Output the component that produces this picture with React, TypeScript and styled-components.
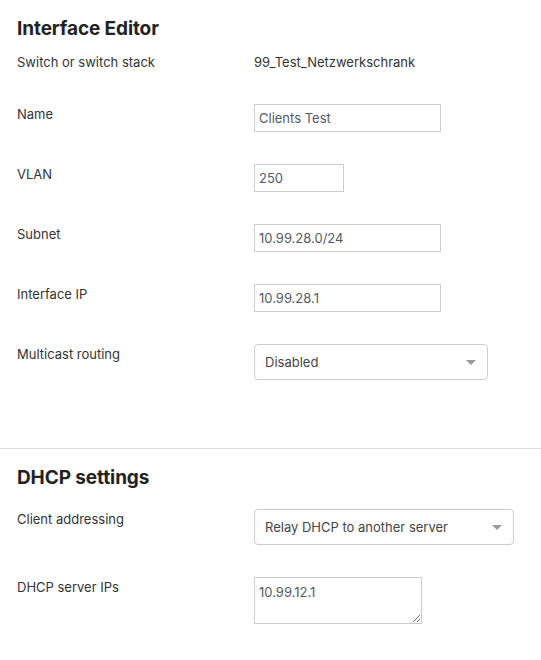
import React from 'react';
import styled, { createGlobalStyle } from 'styled-components';

const GlobalStyle = createGlobalStyle`
  html, body {
    margin: 0;
    padding: 0;
    background: #ffffff;
  }
  body {
    font-family: Inter, "Noto Sans", "Liberation Sans", sans-serif;
    color: #333333;
  }
`;

const Section = styled.section<{ $divider?: boolean; $bottom: number }>`
  padding: 17px 17px ${p => p.$bottom}px 17px;
  border-bottom: ${p => (p.$divider ? '1px solid #dcdcdc' : 'none')};
`;

const Title = styled.h2<{ $gap: number }>`
  margin: 0 0 ${p => p.$gap}px 0;
  font-size: 19px;
  line-height: 24px;
  font-weight: 700;
  color: #222222;
  letter-spacing: -0.1px;
`;

const Row = styled.div<{ $gap?: number }>`
  display: grid;
  grid-template-columns: 237px 1fr;
  align-items: start;
  margin-bottom: ${p => p.$gap ?? 32}px;
`;

const Label = styled.div`
  font-size: 13px;
  line-height: 20px;
  color: #333333;
`;

const Value = styled.div`
  font-size: 13px;
  line-height: 20px;
  color: #333333;
`;

const TextInput = styled.input<{ $width: number }>`
  box-sizing: border-box;
  width: ${p => p.$width}px;
  height: 28px;
  margin: 0;
  padding: 0 4px;
  border: 1px solid #cccccc;
  border-radius: 0;
  font-family: inherit;
  font-size: 13px;
  color: #555a66;
  background: #ffffff;
  outline: none;
`;

const SelectBox = styled.div<{ $width: number }>`
  box-sizing: border-box;
  width: ${p => p.$width}px;
  height: 36px;
  display: flex;
  align-items: center;
  justify-content: space-between;
  padding: 0 11px 0 10px;
  border: 1px solid #cccccc;
  border-radius: 4px;
  background: #ffffff;
  font-size: 13px;
  color: #444444;
`;

const Caret = styled.span`
  width: 0;
  height: 0;
  border-left: 5px solid transparent;
  border-right: 5px solid transparent;
  border-top: 5px solid #999999;
`;

const TextArea = styled.textarea`
  box-sizing: border-box;
  width: 168px;
  height: 47px;
  margin: 0;
  padding: 6px 4px;
  border: 1px solid #cccccc;
  border-radius: 0;
  font-family: inherit;
  font-size: 13px;
  line-height: 16px;
  color: #555a66;
  resize: vertical;
  outline: none;
  display: block;
`;

const Select: React.FC<{ width: number; value: string }> = ({ width, value }) => (
  <SelectBox $width={width}>
    <span>{value}</span>
    <Caret />
  </SelectBox>
);

export default function App() {
  return (
    <>
      <GlobalStyle />
      <Section $divider $bottom={68}>
        <Title $gap={11}>Interface Editor</Title>
        <Row>
          <Label>Switch or switch stack</Label>
          <Value>99_Test_Netzwerkschrank</Value>
        </Row>
        <Row>
          <Label>Name</Label>
          <TextInput $width={187} defaultValue="Clients Test" />
        </Row>
        <Row>
          <Label>VLAN</Label>
          <TextInput $width={90} defaultValue="250" />
        </Row>
        <Row>
          <Label>Subnet</Label>
          <TextInput $width={187} defaultValue="10.99.28.0/24" />
        </Row>
        <Row>
          <Label>Interface IP</Label>
          <TextInput $width={187} defaultValue="10.99.28.1" />
        </Row>
        <Row $gap={0}>
          <Label>Multicast routing</Label>
          <Select width={234} value="Disabled" />
        </Row>
      </Section>
      <Section $bottom={37}>
        <Title $gap={19}>DHCP settings</Title>
        <Row>
          <Label>Client addressing</Label>
          <Select width={260} value="Relay DHCP to another server" />
        </Row>
        <Row $gap={0}>
          <Label>DHCP server IPs</Label>
          <TextArea defaultValue="10.99.12.1" />
        </Row>
      </Section>
    </>
  );
}
